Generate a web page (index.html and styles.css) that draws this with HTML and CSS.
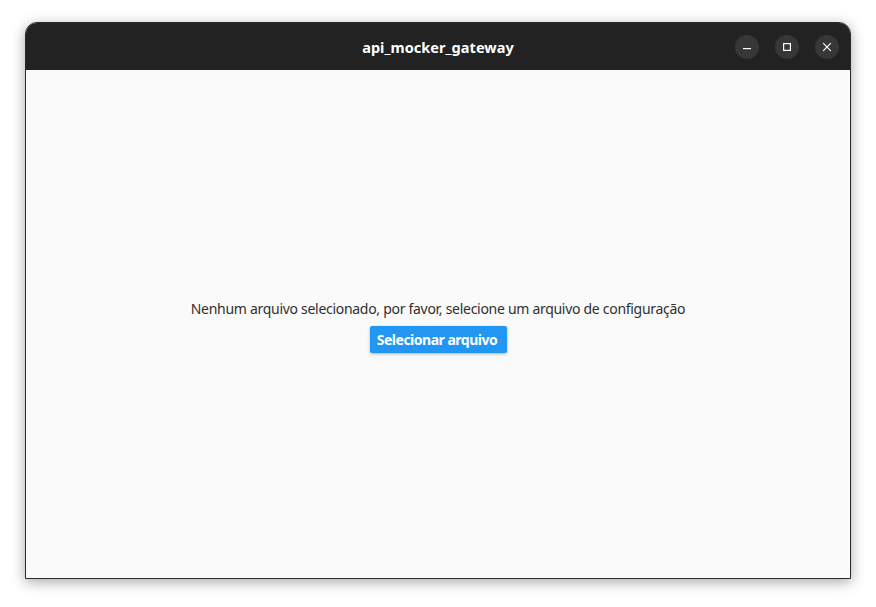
FILE: index.html
```html
<!DOCTYPE html>
<html lang="pt">
<head>
<meta charset="utf-8">
<title>api_mocker_gateway</title>
<link rel="stylesheet" href="styles.css">
</head>
<body>
<div class="desktop">
  <div class="window">
    <header class="titlebar">
      <div class="title">api_mocker_gateway</div>
      <div class="controls">
        <button class="ctl" aria-label="Minimizar">
          <svg width="10" height="10" viewBox="0 0 10 10"><rect x="1" y="6" width="8" height="1.2" fill="#fff"/></svg>
        </button>
        <button class="ctl" aria-label="Maximizar">
          <svg width="10" height="10" viewBox="0 0 10 10"><rect x="1.6" y="1.6" width="6.8" height="6.8" fill="none" stroke="#fff" stroke-width="1.2"/></svg>
        </button>
        <button class="ctl" aria-label="Fechar">
          <svg width="10" height="10" viewBox="0 0 10 10"><path d="M1.2 1.2 L8.8 8.8 M8.8 1.2 L1.2 8.8" stroke="#fff" stroke-width="1.2" fill="none"/></svg>
        </button>
      </div>
    </header>
    <main class="content">
      <p class="message">Nenhum arquivo selecionado, por favor, selecione um arquivo de configuração</p>
      <button class="select-btn">Selecionar arquivo</button>
    </main>
  </div>
</div>
</body>
</html>
```
FILE: styles.css
```css
html, body {
  margin: 0;
  padding: 0;
  background: #ffffff;
  width: 876px;
  height: 607px;
  overflow: hidden;
}
.desktop {
  padding: 22px 0 0 25px;
}
.window {
  width: 826px;
  height: 557px;
  box-sizing: border-box;
  border-radius: 12px 12px 0 0;
  background: #fafafa;
  border: 1px solid #2a2a2a;
  box-shadow: 0 3px 14px rgba(0,0,0,0.35);
  display: flex;
  flex-direction: column;
  overflow: hidden;
  font-family: "Noto Sans", "Open Sans", sans-serif;
}
.titlebar {
  height: 47px;
  flex: none;
  background: #222222;
  position: relative;
  display: flex;
  align-items: center;
  justify-content: center;
}
.title {
  color: #ffffff;
  font-weight: bold;
  font-size: 14.5px;
  letter-spacing: 0.05px;
}
.controls {
  position: absolute;
  right: 11px;
  top: 12px;
  display: flex;
  gap: 16px;
}
.ctl {
  width: 24px;
  height: 24px;
  border-radius: 50%;
  border: none;
  padding: 0;
  background: #373737;
  display: flex;
  align-items: center;
  justify-content: center;
}
.content {
  flex: 1;
  display: flex;
  flex-direction: column;
  align-items: center;
  justify-content: center;
  padding-top: 5px;
}
.message {
  margin: 0 0 8px 0;
  color: #303030;
  font-size: 14px;
  line-height: 18px;
  letter-spacing: -0.29px;
}
.select-btn {
  font-family: inherit;
  width: 137px;
  height: 27px;
  border: none;
  border-radius: 2px;
  background: #2196f3;
  color: #ffffff;
  font-weight: bold;
  font-size: 14px;
  letter-spacing: -0.5px;
  padding: 0 2px 0 0;
  box-shadow: 0 1px 3px rgba(0,0,0,0.3);
}
```
